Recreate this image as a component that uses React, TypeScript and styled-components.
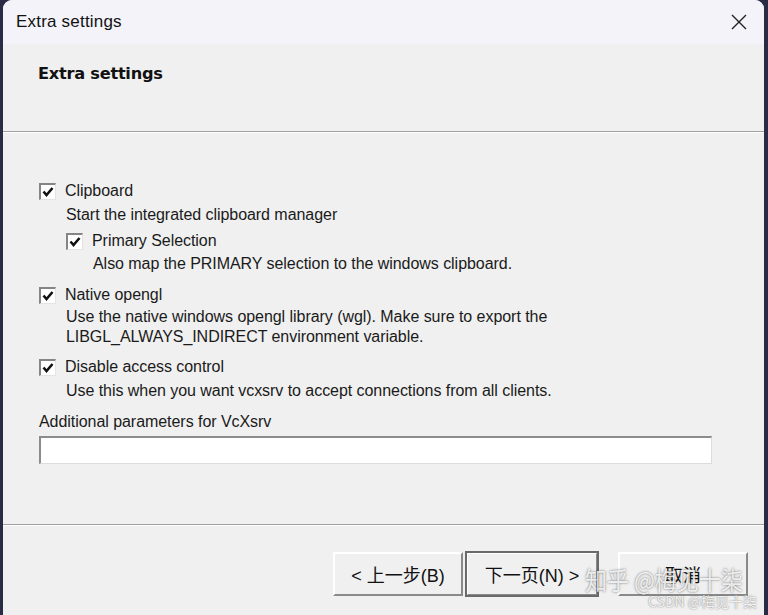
import styled, { createGlobalStyle } from "styled-components";

const GlobalStyle = createGlobalStyle`
  html, body {
    margin: 0;
    padding: 0;
    background: #2a2c46;
    overflow: hidden;
  }
  * { box-sizing: border-box; }
`;

const uiFont = `"Liberation Sans", "Noto Sans CJK SC", sans-serif`;

function Check() {
  return (
    <svg width="12" height="12" viewBox="0 0 12 12">
      <path d="M1.5 5.5 L4.5 9 L10.5 2" fill="none" stroke="#111" strokeWidth="2.6" />
    </svg>
  );
}

type OptionProps = {
  label: string;
  lines: string[];
  children?: React.ReactNode;
  gap?: number;
  descGap?: number;
};

function Option({ label, lines, children, gap = 0, descGap = 4 }: OptionProps) {
  return (
    <OptionBlock $gap={gap}>
      <CheckRow>
        <Box>
          <Check />
        </Box>
        <Label>{label}</Label>
      </CheckRow>
      <Desc $gap={descGap}>
        {lines.map((l) => (
          <div key={l}>{l}</div>
        ))}
      </Desc>
      {children}
    </OptionBlock>
  );
}

export default function App() {
  return (
    <>
      <GlobalStyle />
      <Window>
        <TitleBar>
          <Title>Extra settings</Title>
          <Close>
            <svg width="18" height="18" viewBox="0 0 18 18">
              <path d="M2 2 L16 16 M16 2 L2 16" stroke="#222" strokeWidth="1.4" />
            </svg>
          </Close>
        </TitleBar>
        <Header>
          <HeaderTitle>Extra settings</HeaderTitle>
        </Header>
        <Content>
          <Option label="Clipboard" lines={["Start the integrated clipboard manager"]}>
            <Nested>
              <Option
                label="Primary Selection"
                descGap={3}
                lines={["Also map the PRIMARY selection to the windows clipboard."]}
              />
            </Nested>
          </Option>
          <Option
            label="Native opengl"
            gap={11}
            descGap={2}
            lines={[
              "Use the native windows opengl library (wgl). Make sure to export the",
              "LIBGL_ALWAYS_INDIRECT environment variable.",
            ]}
          />
          <Option
            label="Disable access control"
            gap={10}
            lines={["Use this when you want vcxsrv to accept connections from all clients."]}
          />
          <FieldLabel>Additional parameters for VcXsrv</FieldLabel>
          <Field />
        </Content>
        <Footer>
          <Button>&lt; 上一步(B)</Button>
          <Button $primary>下一页(N) &gt;</Button>
          <Button $spaced>取消</Button>
        </Footer>
        <Watermark>知乎 @梅见十柒</Watermark>
        <SmallMark>CSDN @梅见十柒</SmallMark>
      </Window>
    </>
  );
}

const Window = styled.div`
  position: relative;
  margin-left: 3px;
  width: 761px;
  height: 615px;
  border-radius: 9px 9px 0 0;
  background: #f0f0f0;
  overflow: hidden;
  display: flex;
  flex-direction: column;
  font-family: ${uiFont};
  color: #1a1a1a;
`;

const TitleBar = styled.div`
  height: 44px;
  flex-shrink: 0;
  background: #f3f3f9;
  display: flex;
  align-items: center;
  justify-content: space-between;
  padding: 0 13px 0 13px;
`;

const Title = styled.div`
  font-size: 17px;
  letter-spacing: 0.2px;
  color: #111;
`;

const Close = styled.div`
  width: 24px;
  height: 24px;
  display: flex;
  align-items: center;
  justify-content: center;
`;

const Header = styled.div`
  height: 88px;
  flex-shrink: 0;
  padding: 20px 0 0 35px;
  border-bottom: 1px solid #a0a0a0;
  box-shadow: 0 1px 0 #ffffff;
`;

const HeaderTitle = styled.div`
  font-family: "DejaVu Sans", sans-serif;
  font-weight: bold;
  font-size: 16.2px;
  letter-spacing: -0.25px;
  color: #111;
`;

const Content = styled.div`
  padding: 49px 0 0 33px;
  height: 393px;
  flex-shrink: 0;
  border-bottom: 1px solid #a0a0a0;
  box-shadow: 0 1px 0 #ffffff;
`;

const OptionBlock = styled.div<{ $gap: number }>`
  margin-top: ${(p) => p.$gap}px;
`;

const CheckRow = styled.div`
  display: flex;
  align-items: center;
  height: 20px;
`;

const Box = styled.div`
  width: 17px;
  height: 17px;
  background: #fff;
  border-top: 2px solid #858585;
  border-left: 2px solid #858585;
  border-right: 1px solid #e4e4e4;
  border-bottom: 1px solid #e4e4e4;
  display: flex;
  align-items: center;
  justify-content: center;
  margin: 0 9px 0 3px;
`;

const Label = styled.div`
  font-size: 16px;
  letter-spacing: -0.05px;
`;

const Desc = styled.div<{ $gap: number }>`
  padding-left: 30px;
  margin-top: ${(p) => p.$gap}px;
  font-size: 16px;
  letter-spacing: -0.05px;
  line-height: 20px;
`;

const Nested = styled.div`
  padding-left: 27px;
  margin-top: 6px;
`;

const FieldLabel = styled.div`
  margin-top: 11px;
  padding-left: 3px;
  font-size: 16px;
  letter-spacing: -0.05px;
  line-height: 20px;
`;

const Field = styled.div`
  margin: 4px 0 0 3px;
  width: 673px;
  height: 28px;
  background: #fff;
  border-top: 2px solid #8c8c8c;
  border-left: 2px solid #8c8c8c;
  border-right: 1px solid #dcdcdc;
  border-bottom: 1px solid #dcdcdc;
`;

const Footer = styled.div`
  display: flex;
  justify-content: flex-end;
  align-items: flex-start;
  padding: 27px 16px 0 0;
  gap: 3px;
`;

const Button = styled.div<{ $primary?: boolean; $spaced?: boolean }>`
  width: ${(p) => (p.$primary ? 132 : 130)}px;
  height: 44px;
  margin-left: ${(p) => (p.$spaced ? 17 : 0)}px;
  display: flex;
  align-items: center;
  justify-content: center;
  font-size: 18px;
  color: #111;
  background: #f0f0f0;
  border-top: 2px solid #ffffff;
  border-left: 2px solid #ffffff;
  border-right: 2px solid #8a8a8a;
  border-bottom: 2px solid #8a8a8a;
  outline: ${(p) => (p.$primary ? "2px solid #6a6a6a" : "none")};
  outline-offset: -1px;
`;

const Watermark = styled.div`
  position: absolute;
  left: 582px;
  top: 563px;
  font-family: "Noto Sans CJK SC", sans-serif;
  font-size: 22px;
  line-height: 30px;
  transform: scaleY(1.15);
  color: rgba(255, 255, 255, 0.85);
  text-shadow: 0 0 2px rgba(60, 60, 60, 0.8);
  white-space: nowrap;
`;

const SmallMark = styled.div`
  position: absolute;
  left: 645px;
  top: 592px;
  font-family: "Noto Sans CJK SC", sans-serif;
  font-size: 14px;
  line-height: 18px;
  color: rgba(255, 255, 255, 0.9);
  text-shadow: 0 0 1.5px rgba(80, 80, 80, 0.9);
  white-space: nowrap;
`;
